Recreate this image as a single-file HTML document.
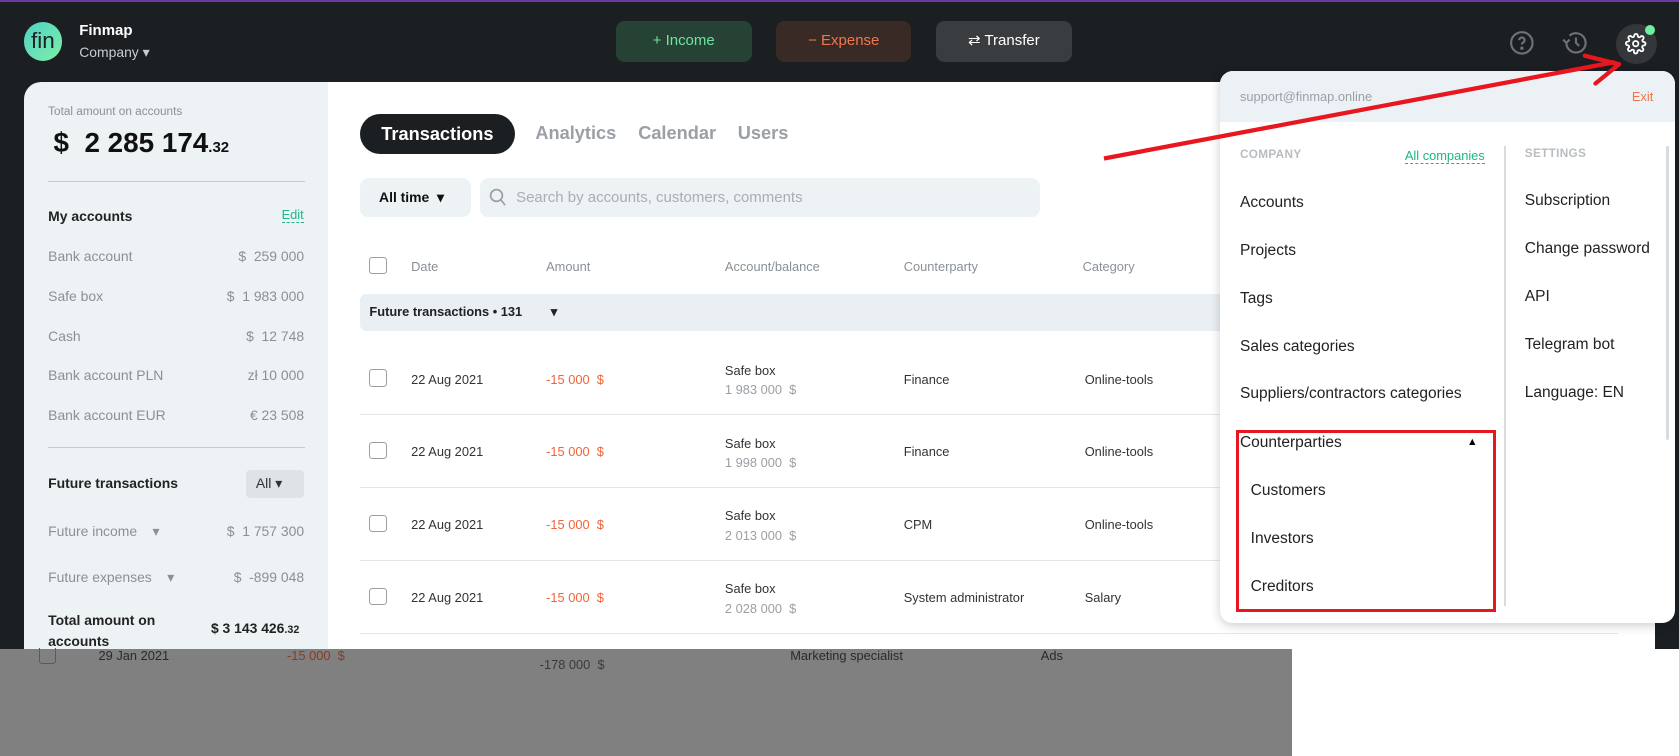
<!DOCTYPE html><html><head><meta charset="utf-8"><style>
*{box-sizing:border-box;margin:0;padding:0}
html,body{width:1679px;height:756px;overflow:hidden;background:#fff}
#w{zoom:1.07079;width:1568px;height:706px;position:relative;font-family:"Liberation Sans",Arial,sans-serif;overflow:hidden}
.a{position:absolute;white-space:nowrap}
.top{left:0;top:0;width:1568px;height:606px;background:#1b1f22;border-top:2px solid #6a3aa0}
.side{left:22px;top:77px;width:284px;height:529px;background:#edf2f5;border-radius:16px 0 0 0}
.main{left:306px;top:77px;width:1240px;height:529px;background:#fff}
.g{color:#8a9096;font-size:13px}
.v{color:#8a9096;font-size:13px;text-align:right}
.hl{border-top:1px solid #e3e7ea}
.btn{top:20px;height:38px;border-radius:8px;font-size:14px;text-align:center;line-height:38px}
.cb{width:16px;height:16px;border:1.5px solid #9aa0a6;border-radius:3px}
.dd{left:1139px;top:66px;width:425px;height:516px;background:#fff;border-radius:12px;box-shadow:0 2px 10px rgba(0,0,0,.2);overflow:hidden}
.mi{font-size:14.5px;color:#222}
.tab{top:115px;font-size:17px;font-weight:bold;color:#9aa0a6}
</style></head><body><div id="w">
<div class="a top"></div>
<div class="a" style="left:22px;top:21px;width:36px;height:36px;border-radius:50%;background:linear-gradient(135deg,#4fd1c5,#7ef0a8);color:#1b1f22;font-size:21px;text-align:center;line-height:35px">fin</div>
<div class="a" style="left:74px;top:21px;color:#fff;font-weight:bold;font-size:14px">Finmap</div>
<div class="a" style="left:74px;top:41px;color:#c8ccd0;font-size:13px">Company ▾</div>
<div class="a btn" style="left:575px;width:127px;background:#264234;color:#6fe3a0">+ Income</div>
<div class="a btn" style="left:725px;width:126px;background:#3a2a26;color:#f0764a">− Expense</div>
<div class="a btn" style="left:874px;width:127px;background:#3a3d40;color:#fff">⇄ Transfer</div>
<svg class="a" style="left:1409px;top:28px" width="24" height="24" viewBox="0 0 24 24" fill="none" stroke="#6d7276" stroke-width="2"><circle cx="12" cy="12" r="10"/><path d="M9.5 9.5a2.5 2.5 0 1 1 3.5 2.3c-.7.4-1 .9-1 1.7"/><circle cx="12" cy="17" r=".6" fill="#6d7276"/></svg>
<svg class="a" style="left:1458px;top:28px" width="26" height="24" viewBox="0 0 26 24" fill="none" stroke="#6d7276" stroke-width="2"><path d="M5 12a9 9 0 1 0 3-6.7"/><path d="M2 9l3 3 3-3"/><path d="M14 7v5l3 3"/></svg>
<div class="a" style="left:1509px;top:22px;width:38px;height:38px;border-radius:50%;background:#33373a"></div>
<svg class="a" style="left:1518px;top:31px" width="20" height="20" viewBox="0 0 24 24" fill="none" stroke="#fff" stroke-width="2"><circle cx="12" cy="12" r="3"/><path d="M19.4 15a1.7 1.7 0 0 0 .3 1.8l.1.1a2 2 0 1 1-2.8 2.8l-.1-.1a1.7 1.7 0 0 0-2.9 1.2V21a2 2 0 1 1-4 0v-.1A1.7 1.7 0 0 0 7 19.4l-.1.1a2 2 0 1 1-2.8-2.8l.1-.1A1.7 1.7 0 0 0 3 13.7H3a2 2 0 1 1 0-4h.1A1.7 1.7 0 0 0 4.6 7l-.1-.1a2 2 0 1 1 2.8-2.8l.1.1A1.7 1.7 0 0 0 10.3 3V3a2 2 0 1 1 4 0v.1a1.7 1.7 0 0 0 2.9 1.2l.1-.1a2 2 0 1 1 2.8 2.8l-.1.1a1.7 1.7 0 0 0 1.2 2.9H21a2 2 0 1 1 0 4h-.1a1.7 1.7 0 0 0-1.5 1z"/></svg>
<div class="a" style="left:1536px;top:23px;width:10px;height:10px;border-radius:50%;background:#6ff0a0"></div>

<div class="a side"></div>
<div class="a main"></div>
<div class="a g" style="left:45px;top:98px;font-size:11px">Total amount on accounts</div>
<div class="a" style="left:50px;top:119px;font-size:26px;font-weight:bold;color:#111">$&nbsp; 2 285 174<span style="font-size:14px">.32</span></div>
<div class="a hl" style="left:45px;top:169px;width:240px;border-color:#c8ccd0"></div>
<div class="a" style="left:45px;top:194px;font-size:13px;font-weight:bold;color:#222">My accounts</div>
<div class="a" style="left:263px;top:193px;font-size:12px;color:#20b486;border-bottom:1px dashed #20b486">Edit</div>
<div class="a g" style="left:45px;top:232px">Bank account</div><div class="a v" style="right:1284px;top:232px">$&nbsp; 259 000</div>
<div class="a g" style="left:45px;top:269px">Safe box</div><div class="a v" style="right:1284px;top:269px">$&nbsp; 1 983 000</div>
<div class="a g" style="left:45px;top:306px">Cash</div><div class="a v" style="right:1284px;top:306px">$&nbsp; 12 748</div>
<div class="a g" style="left:45px;top:343px">Bank account PLN</div><div class="a v" style="right:1284px;top:343px">zł 10 000</div>
<div class="a g" style="left:45px;top:380px">Bank account EUR</div><div class="a v" style="right:1284px;top:380px">€ 23 508</div>
<div class="a hl" style="left:45px;top:417px;width:240px;border-color:#c8ccd0"></div>
<div class="a" style="left:45px;top:444px;font-size:13px;font-weight:bold;color:#222">Future transactions</div>
<div class="a" style="left:230px;top:439px;width:54px;height:26px;background:#dde3e7;border-radius:4px;font-size:13px;line-height:26px;padding-left:9px;color:#333">All ▾</div>
<div class="a g" style="left:45px;top:488px">Future income&nbsp;&nbsp;&nbsp; ▾</div><div class="a v" style="right:1284px;top:488px">$&nbsp; 1 757 300</div>
<div class="a g" style="left:45px;top:531px">Future expenses&nbsp;&nbsp;&nbsp; ▾</div><div class="a v" style="right:1284px;top:531px">$&nbsp; -899 048</div>
<div class="a" style="left:45px;top:570px;font-size:13px;font-weight:bold;color:#222;line-height:19px">Total amount on<br>accounts</div>
<div class="a" style="left:197px;top:579px;font-size:13px;font-weight:bold;color:#222">$ 3 143 426<span style="font-size:10px">.32</span></div>

<div class="a" style="left:336px;top:106px;width:145px;height:38px;border-radius:19px;background:#1b1f22;color:#fff;font-size:17px;font-weight:bold;text-align:center;line-height:38px">Transactions</div>
<div class="a tab" style="left:500px">Analytics</div>
<div class="a tab" style="left:596px">Calendar</div>
<div class="a tab" style="left:689px">Users</div>
<div class="a" style="left:336px;top:166px;width:104px;height:37px;border-radius:8px;background:#edf2f5;font-size:13px;font-weight:bold;line-height:37px;padding-left:18px;color:#111">All time&nbsp; ▾</div>
<div class="a" style="left:448px;top:166px;width:523px;height:37px;border-radius:8px;background:#edf2f5;font-size:14px;line-height:37px;padding-left:34px;color:#a8aeb3">Search by accounts, customers, comments</div>
<svg class="a" style="left:457px;top:176px" width="16" height="17" viewBox="0 0 16 17" fill="none" stroke="#9aa0a6" stroke-width="1.6"><circle cx="7" cy="7" r="5.5"/><path d="M11 11l4 5"/></svg>
<div class="a cb" style="left:345px;top:240px"></div>
<div class="a g" style="left:384px;top:242px;font-size:12px">Date</div>
<div class="a g" style="left:510px;top:242px;font-size:12px">Amount</div>
<div class="a g" style="left:677px;top:242px;font-size:12px">Account/balance</div>
<div class="a g" style="left:844px;top:242px;font-size:12px">Counterparty</div>
<div class="a g" style="left:1011px;top:242px;font-size:12px">Category</div>
<div class="a" style="left:336px;top:275px;width:810px;height:34px;background:#e9eff3;border-radius:6px 0 0 6px;font-size:12px;font-weight:bold;line-height:34px;padding-left:9px;color:#222">Future transactions • 131&nbsp;&nbsp;&nbsp;&nbsp;&nbsp;&nbsp;&nbsp; ▾</div>

<div class="a cb" style="left:345px;top:345px"></div><div class="a" style="left:384px;top:347px;font-size:12px;color:#333">22 Aug 2021</div><div class="a" style="left:510px;top:347px;font-size:12px;color:#f0643a">-15 000&nbsp; $</div><div class="a" style="left:677px;top:337px;font-size:12px;color:#333;line-height:18px">Safe box<br><span style="color:#9aa0a6">1 983 000&nbsp; $</span></div><div class="a" style="left:844px;top:347px;font-size:12px;color:#333">Finance</div><div class="a" style="left:1013px;top:347px;font-size:12px;color:#333">Online-tools</div>
<div class="a hl" style="left:336px;top:387px;width:810px"></div>
<div class="a cb" style="left:345px;top:413px"></div><div class="a" style="left:384px;top:415px;font-size:12px;color:#333">22 Aug 2021</div><div class="a" style="left:510px;top:415px;font-size:12px;color:#f0643a">-15 000&nbsp; $</div><div class="a" style="left:677px;top:405px;font-size:12px;color:#333;line-height:18px">Safe box<br><span style="color:#9aa0a6">1 998 000&nbsp; $</span></div><div class="a" style="left:844px;top:415px;font-size:12px;color:#333">Finance</div><div class="a" style="left:1013px;top:415px;font-size:12px;color:#333">Online-tools</div>
<div class="a hl" style="left:336px;top:455px;width:810px"></div>
<div class="a cb" style="left:345px;top:481px"></div><div class="a" style="left:384px;top:483px;font-size:12px;color:#333">22 Aug 2021</div><div class="a" style="left:510px;top:483px;font-size:12px;color:#f0643a">-15 000&nbsp; $</div><div class="a" style="left:677px;top:473px;font-size:12px;color:#333;line-height:18px">Safe box<br><span style="color:#9aa0a6">2 013 000&nbsp; $</span></div><div class="a" style="left:844px;top:483px;font-size:12px;color:#333">CPM</div><div class="a" style="left:1013px;top:483px;font-size:12px;color:#333">Online-tools</div>
<div class="a hl" style="left:336px;top:523px;width:810px"></div>
<div class="a cb" style="left:345px;top:549px"></div><div class="a" style="left:384px;top:551px;font-size:12px;color:#333">22 Aug 2021</div><div class="a" style="left:510px;top:551px;font-size:12px;color:#f0643a">-15 000&nbsp; $</div><div class="a" style="left:677px;top:541px;font-size:12px;color:#333;line-height:18px">Safe box<br><span style="color:#9aa0a6">2 028 000&nbsp; $</span></div><div class="a" style="left:844px;top:551px;font-size:12px;color:#333">System administrator</div><div class="a" style="left:1013px;top:551px;font-size:12px;color:#333">Salary</div>
<div class="a hl" style="left:336px;top:591px;width:1175px"></div>

<div class="a" style="left:0;top:606px;width:1207px;height:100px;background:#808080"></div>
<div class="a" style="left:36px;top:605px;width:16px;height:15px;border:1.5px solid #5a5a5a;border-top:none;border-radius:0 0 3px 3px"></div>
<div class="a" style="left:92px;top:605px;font-size:12px;color:#2a2a2a">29 Jan 2021</div>
<div class="a" style="left:268px;top:605px;font-size:12px;color:#8a3a22">-15 000&nbsp; $</div>
<div class="a" style="left:504px;top:614px;font-size:12px;color:#3a3a3a">-178 000&nbsp; $</div>
<div class="a" style="left:738px;top:605px;font-size:12px;color:#2a2a2a">Marketing specialist</div>
<div class="a" style="left:972px;top:605px;font-size:12px;color:#2a2a2a">Ads</div>

<div class="a dd">
<div style="height:48px;background:#ebf1f5"></div>
</div>
<div class="a" style="left:1158px;top:83px;font-size:12px;color:#9aa0a6">support@finmap.online</div>
<div class="a" style="left:1524px;top:83px;font-size:12px;color:#f0764a">Exit</div>
<div class="a" style="left:1158px;top:138px;font-size:11px;font-weight:bold;color:#b8bdc1;letter-spacing:.3px">COMPANY</div>
<div class="a" style="left:1312px;top:138px;font-size:12px;color:#20b486;border-bottom:1px dashed #20b486">All companies</div>
<div class="a" style="left:1424px;top:137px;font-size:11px;font-weight:bold;color:#b8bdc1;letter-spacing:.3px">SETTINGS</div>
<div class="a" style="left:1405px;top:136px;width:1px;height:430px;background:#d8dcdf"></div>
<div class="a" style="left:1556px;top:136px;width:3px;height:275px;background:#d8dcdf;border-radius:2px"></div>
<div class="a mi" style="left:1158px;top:181px">Accounts</div>
<div class="a mi" style="left:1158px;top:226px">Projects</div>
<div class="a mi" style="left:1158px;top:271px">Tags</div>
<div class="a mi" style="left:1158px;top:316px">Sales categories</div>
<div class="a mi" style="left:1158px;top:360px">Suppliers/contractors categories</div>
<div class="a mi" style="left:1158px;top:405px">Counterparties</div>
<div class="a" style="left:1370px;top:407px;font-size:10px">▲</div>
<div class="a mi" style="left:1168px;top:450px">Customers</div>
<div class="a mi" style="left:1168px;top:495px">Investors</div>
<div class="a mi" style="left:1168px;top:540px">Creditors</div>
<div class="a mi" style="left:1424px;top:179px">Subscription</div>
<div class="a mi" style="left:1424px;top:224px">Change password</div>
<div class="a mi" style="left:1424px;top:269px">API</div>
<div class="a mi" style="left:1424px;top:314px">Telegram bot</div>
<div class="a mi" style="left:1424px;top:359px">Language: EN</div>
<div class="a" style="left:1154px;top:402px;width:243px;height:170px;border:3px solid #e8161e"></div>
<svg class="a" style="left:0;top:0" width="1568" height="706"><path d="M1031 148L1508 58" stroke="#e8161e" stroke-width="4" fill="none"/><path d="M1480 52L1512 60L1490 78" stroke="#e8161e" stroke-width="4" fill="none" stroke-linecap="round" stroke-linejoin="round"/></svg>
</div></body></html>
